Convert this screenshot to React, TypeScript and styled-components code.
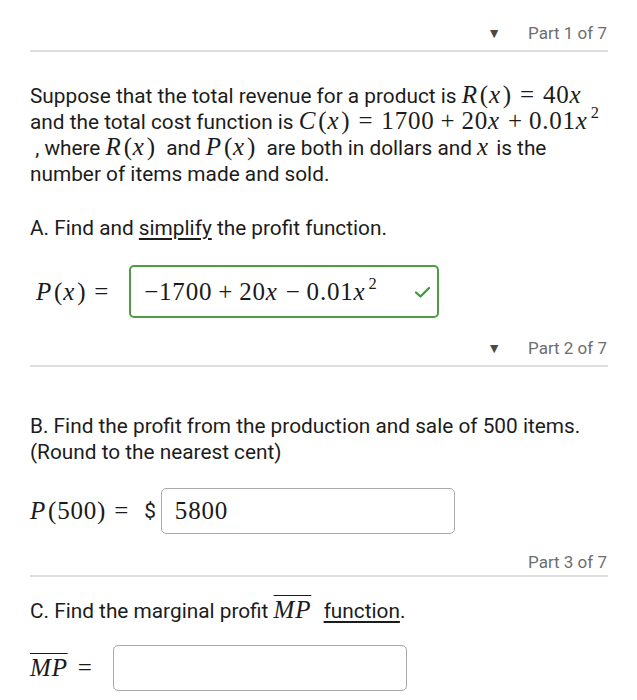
import React from "react";
import styled, { createGlobalStyle } from "styled-components";

const Global = createGlobalStyle`
  html, body { margin: 0; padding: 0; background: #fff; }
  body { font-family: Roboto, Lato, sans-serif; color: #1a1a1a; }
`;

const Page = styled.div`
  width: 637px;
  padding: 19px 29px 0 30px;
  box-sizing: border-box;
`;

const PartHeader = styled.div<{ $mt?: number; $pb?: number; $h?: number }>`
  display: flex;
  justify-content: flex-end;
  align-items: center;
  gap: 27px;
  height: ${(p) => p.$h ?? 33}px;
  box-sizing: border-box;
  padding: 0 1px ${(p) => p.$pb ?? 4}px 0;
  margin-top: ${(p) => p.$mt ?? 0}px;
  border-bottom: 2px solid #dedede;
  font-size: 17px;
  color: #6e6e6e;
`;

const Tri = styled.span`
  font-size: 14px;
  color: #4a4a4a;
`;

const Para = styled.p<{ $mt: number }>`
  margin: ${(p) => p.$mt}px 0 0 0;
  font-size: 20.8px;
  line-height: 26px;
  color: #1c1c1c;
`;

const M = styled.span`
  font-family: "Liberation Serif", "Times New Roman", serif;
  font-size: 25px;
  line-height: 0;
  letter-spacing: 0.8px;
  white-space: nowrap;
`;

const V = styled.i`
  font-family: "Liberation Serif", "Times New Roman", serif;
  padding-right: 2px;
`;

const Sup = styled.sup`
  font-size: 16.5px;
  line-height: 0;
  vertical-align: 11px;
  margin-left: 1px;
`;

const U = styled.span`
  text-decoration: underline;
  text-underline-offset: 3px;
`;

const Over = styled.span`
  text-decoration: overline;
  text-decoration-thickness: 1px;
`;

const AnswerRow = styled.div<{ $mt: number; $indent?: number }>`
  display: flex;
  align-items: center;
  margin-top: ${(p) => p.$mt}px;
  padding-left: ${(p) => p.$indent ?? 0}px;
`;

const Label = styled.span<{ $mr?: number }>`
  font-family: "Liberation Serif", "Times New Roman", serif;
  font-size: 25px;
  letter-spacing: 0.8px;
  margin-right: ${(p) => p.$mr ?? 12}px;
  white-space: nowrap;
`;

const Dollar = styled.span`
  font-size: 20.8px;
  margin-right: 5px;
`;

const Box = styled.div<{ $w: number; $h: number; $ok?: boolean }>`
  width: ${(p) => p.$w}px;
  height: ${(p) => p.$h}px;
  box-sizing: border-box;
  border: ${(p) => (p.$ok ? "2px solid #4e9d45" : "1.5px solid #a9a9a9")};
  border-radius: 5px;
  display: flex;
  align-items: center;
  justify-content: space-between;
  padding: 0 6px 0 13px;
  font-family: "Liberation Serif", "Times New Roman", serif;
  font-size: 25px;
  letter-spacing: 0.8px;
`;

const Eq = styled.span`
  margin: 0 8px;
`;

const Op = styled.span`
  margin: 0 6px;
`;

function Check() {
  return (
    <svg width="17" height="14" viewBox="0 0 17 14">
      <path d="M2 7.5 L6.5 11.5 L15 3" fill="none" stroke="#3f9a3a" strokeWidth="2.3" strokeLinecap="round" strokeLinejoin="round" />
    </svg>
  );
}

export default function App() {
  return (
    <Page>
      <Global />
      <PartHeader>
        <Tri>▼</Tri>
        <span>Part 1 of 7</span>
      </PartHeader>
      <Para $mt={31}>
        Suppose that the total revenue for a product is{" "}
        <M>
          <V>R</V>(<V>x</V>)<Eq>=</Eq>40<V>x</V>
        </M>{" "}
        and the total cost function is{" "}
        <M>
          <V>C</V>(<V>x</V>)<Eq>=</Eq>1700<Op>+</Op>20<V>x</V>
          <Op>+</Op>0.01<V>x</V>
          <Sup>2</Sup>
        </M>
        <br />
        &nbsp;, where{" "}
        <M>
          <V>R</V>(<V>x</V>)
        </M>
        &nbsp; and{" "}
        <M>
          <V>P</V>(<V>x</V>)
        </M>
        &nbsp; are both in dollars and <M><V>x</V></M> is the number of items made and sold.
      </Para>
      <Para $mt={28}>
        A. Find and <U>simplify</U> the profit function.
      </Para>
      <AnswerRow $mt={24} $indent={6}>
        <Label>
          <V>P</V>(<V>x</V>)<Eq>=</Eq>
        </Label>
        <Box $w={310} $h={53} $ok>
          <span>
            −1700<Op>+</Op>20<V>x</V>
            <Op>−</Op>0.01<V>x</V>
            <Sup>2</Sup>
          </span>
          <Check />
        </Box>
      </AnswerRow>
      <PartHeader $mt={16}>
        <Tri>▼</Tri>
        <span>Part 2 of 7</span>
      </PartHeader>
      <Para $mt={46}>
        B. Find the profit from the production and sale of 500 items.
        <br />
        (Round to the nearest cent)
      </Para>
      <AnswerRow $mt={23}>
        <Label $mr={7}>
          <V>P</V>(500)<Eq>=</Eq>
        </Label>
        <Dollar>$</Dollar>
        <Box $w={294} $h={46}>
          <span>5800</span>
        </Box>
      </AnswerRow>
      <PartHeader $mt={15} $pb={0} $h={28}>
        <span>Part 3 of 7</span>
      </PartHeader>
      <Para $mt={21}>
        C. Find the marginal profit{" "}
        <M>
          <Over>
            <V>MP</V>
          </Over>
        </M>
        &nbsp; <U>function</U>.
      </Para>
      <AnswerRow $mt={21}>
        <Label>
          <Over>
            <V>MP</V>
          </Over>
          <Eq>=</Eq>
        </Label>
        <Box $w={294} $h={46} />
      </AnswerRow>
    </Page>
  );
}
